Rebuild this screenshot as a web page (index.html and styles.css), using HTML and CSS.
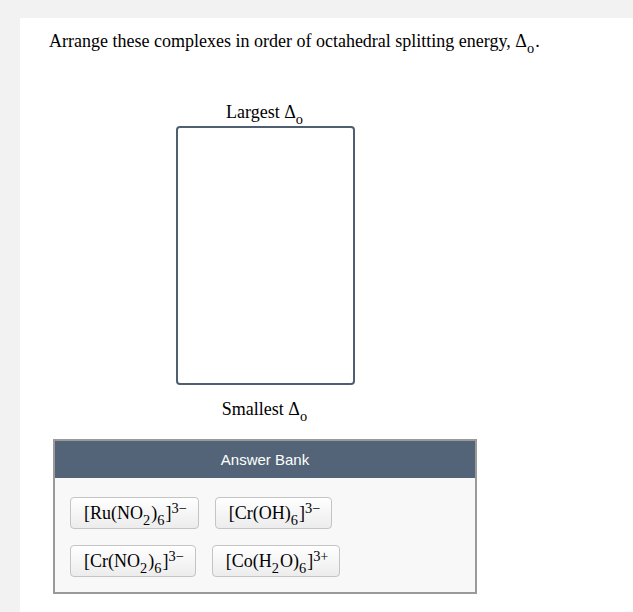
FILE: index.html
```html
<!DOCTYPE html>
<html lang="en">
<head>
<meta charset="utf-8">
<title>Octahedral splitting energy</title>
<link rel="stylesheet" href="styles.css">
</head>
<body>
<main class="panel">
  <p class="question">Arrange these complexes in order of octahedral splitting energy, Δ<sub class="sub">o</sub>.</p>

  <section class="sorter">
    <div class="rank-label rank-top">Largest Δ<sub class="sub">o</sub></div>
    <div class="drop-zone"></div>
    <div class="rank-label rank-bottom">Smallest Δ<sub class="sub">o</sub></div>

    <div class="bank">
      <div class="bank-header">Answer Bank</div>
      <div class="bank-body">
        <div class="bank-row">
          <button class="chip">[Ru(NO<sub class="sub">2</sub>)<sub class="sub">6</sub>]<sup class="sup">3−</sup></button>
          <button class="chip">[Cr(OH)<sub class="sub">6</sub>]<sup class="sup">3−</sup></button>
        </div>
        <div class="bank-row">
          <button class="chip">[Cr(NO<sub class="sub">2</sub>)<sub class="sub">6</sub>]<sup class="sup">3−</sup></button>
          <button class="chip">[Co(H<sub class="sub">2</sub>O)<sub class="sub">6</sub>]<sup class="sup">3+</sup></button>
        </div>
      </div>
    </div>
  </section>
</main>
</body>
</html>
```

FILE: styles.css
```css
html, body {
  margin: 0;
  padding: 0;
  background: #f2f2f2;
}

body {
  font-family: "Liberation Serif", "Times New Roman", serif;
  font-size: 18px;
  color: #000;
}

.panel {
  margin: 18px 0 0 20px;
  min-height: 594px;
  background: #fff;
  padding: 12px 0 0 29px;
  box-sizing: border-box;
}

.question {
  margin: 0;
  line-height: 22px;
}

/* chemical sub/superscripts */
.sub {
  font-size: 0.8em;
  line-height: 0;
  vertical-align: -0.4em;
  padding: 0 1px 0 0;
}

.sup {
  font-size: 0.8em;
  line-height: 0;
  vertical-align: 0.45em;
}

.sorter {
  width: 424px;
  margin: 49px 0 0 4px;
  display: flex;
  flex-direction: column;
  align-items: center;
}

.rank-label {
  line-height: 22px;
  text-align: center;
}

.drop-zone {
  width: 179px;
  height: 259px;
  margin-top: 3px;
  border: 2px solid #4f5e70;
  border-radius: 4px;
  box-sizing: border-box;
}

.rank-bottom {
  margin-top: 13px;
}

.bank {
  align-self: stretch;
  margin-top: 19px;
  border: 2px solid #9a9a9a;
  background: #f8f8f8;
}

.bank-header {
  height: 37px;
  line-height: 37px;
  background: #536479;
  color: #fff;
  font-family: "Liberation Sans", Arial, sans-serif;
  font-size: 15px;
  text-align: center;
}

.bank-body {
  padding: 19px 15px 15px;
  display: flex;
  flex-direction: column;
  gap: 16px;
}

.bank-row {
  display: flex;
  gap: 16px;
}

.chip {
  height: 32px;
  padding: 0 11px 0 13px;
  font-family: inherit;
  font-size: 18px;
  color: #000;
  line-height: 30px;
  border: 1px solid #c4c4c4;
  border-radius: 4px;
  background: linear-gradient(#ffffff, #ececec);
  cursor: pointer;
}
```
